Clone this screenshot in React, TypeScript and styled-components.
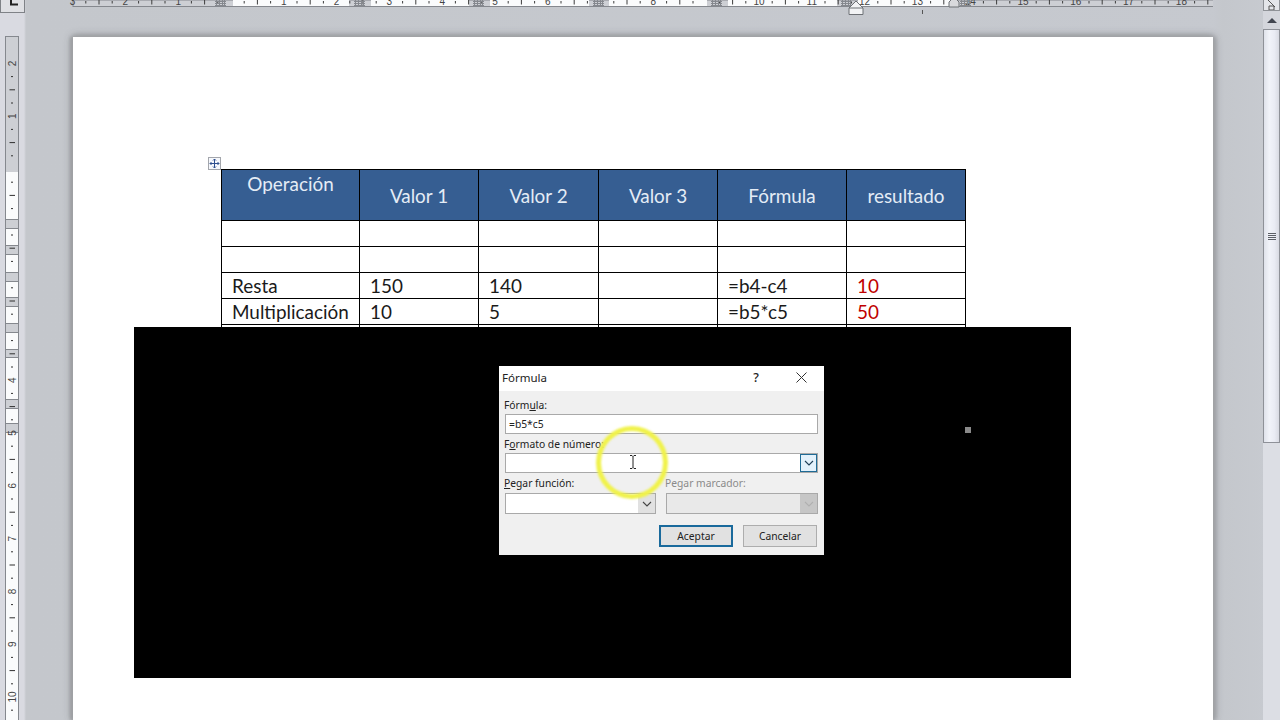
import React from "react";
import styled, { createGlobalStyle } from "styled-components";

const GlobalStyle = createGlobalStyle`
  html, body { margin: 0; padding: 0; background: #c8cbd1; }
  #root { width: 1280px; height: 720px; overflow: hidden; }
`;

const Workspace = styled.div`
  width: 1280px;
  height: 720px;
  overflow: hidden;
  display: grid;
  grid-template-columns: 73px 1140px 67px;
  grid-template-rows: 36px 684px;
  background: linear-gradient(90deg, #d9dae1 0, #d9dae1 24px, #c4c7cc 26px, #c6c9cf 100%);
`;

const RulerSvg = styled.svg`
  display: block;
  overflow: visible;
`;

const Gutter = styled.div`
  grid-row: 1 / span 2;
  grid-column: 3;
  display: flex;
  justify-content: flex-end;
  background: linear-gradient(90deg, #c6c9cf 0, #c4c7cc 10px, #c8cbd1 100%);
`;

const ScrollColumn = styled.div`
  width: 17px;
  background: #dcdee4;
  display: flex;
  flex-direction: column;
`;

const SplitButton = styled.div`
  height: 11px;
  box-sizing: border-box;
  border: 1px solid #8f9297;
  border-top: 0;
  background: #e4e6ea;
  display: flex;
  justify-content: center;
`;

const ArrowArea = styled.div`
  height: 18px;
  background: #d4d6dc;
  display: flex;
  align-items: center;
  justify-content: center;
`;

const UpArrow = styled.div`
  width: 0;
  height: 0;
  border-left: 5px solid transparent;
  border-right: 5px solid transparent;
  border-bottom: 5px solid #41454f;
`;

const Thumb = styled.div`
  height: 414px;
  box-sizing: border-box;
  border: 1px solid #8e9198;
  background: linear-gradient(90deg, #dfe2ea 0, #f1f3f9 35%, #e9ebf3 70%, #d8dae2 100%);
  display: flex;
  align-items: center;
  justify-content: center;
`;

const Grip = styled.div`
  width: 8px;
  height: 7px;
  background: repeating-linear-gradient(180deg, #5c5f66 0, #5c5f66 1px, transparent 1px, transparent 2px);
`;

const Sheet = styled.div`
  position: relative;
  margin-top: 1px;
  background: #fff;
  box-shadow: 0 -2px 4px #a2a4a7, -3px 0 3px #9d9fa2, 3px 0 4px #a0a2a5, 0 0 9px rgba(60, 62, 66, 0.45);
`;

const TableArea = styled.div`
  padding: 132px 0 0 148px;
`;

const MoveHandle = styled.div`
  position: absolute;
  left: 135px;
  top: 120px;
  width: 13px;
  height: 13px;
  box-sizing: border-box;
  border: 1px solid #a3a6ac;
  background: #f6f8fc;
  display: flex;
  align-items: center;
  justify-content: center;
`;

const DocTable = styled.table`
  border-collapse: collapse;
  table-layout: fixed;
  width: 744px;
  font-family: Lato, "Noto Sans", sans-serif;
  font-size: 18.9px;
  color: #1a1a1a;
`;

const HeadCell = styled.th<{ $top?: boolean }>`
  height: 51px;
  box-sizing: border-box;
  padding: ${p => (p.$top ? "2px 0 0" : "0")};
  vertical-align: ${p => (p.$top ? "top" : "middle")};
  border: 1px solid #000;
  background: #365e92;
  color: #e4ecf6;
  font-weight: 400;
  line-height: 23px;
  text-align: center;
`;

const BodyCell = styled.td<{ $red?: boolean }>`
  height: 26px;
  padding: 0 0 0 10px;
  border: 1px solid #000;
  box-sizing: border-box;
  line-height: 24px;
  white-space: nowrap;
  color: ${p => (p.$red ? "#c00000" : "#1a1a1a")};
`;

const BlackOut = styled.div`
  position: absolute;
  left: 61px;
  top: 290px;
  width: 937px;
  height: 351px;
  background: #000;
  box-sizing: border-box;
  padding: 39px 0 0 365px;
`;

const Speck = styled.div`
  position: absolute;
  left: 831px;
  top: 100px;
  width: 6px;
  height: 6px;
  background: #8a8a8a;
`;

const Dialog = styled.div`
  position: relative;
  width: 325px;
  height: 189px;
  background: #f0f0f0;
  font-family: "Noto Sans", "Open Sans", sans-serif;
  font-size: 10.3px;
  color: #222;
`;

const TitleBar = styled.div`
  height: 25px;
  box-sizing: border-box;
  padding: 0 0 2px 3px;
  background: #fff;
  display: flex;
  align-items: center;
  font-size: 11.5px;
`;

const TitleText = styled.span`
  flex: 1;
`;

const HelpMark = styled.span`
  width: 10px;
  margin-right: 35px;
  text-align: center;
  font-size: 12.5px;
  font-weight: 500;
`;

const CloseWrap = styled.span`
  display: flex;
  margin-right: 17px;
`;

const Body = styled.div`
  padding: 7px 6px 0 6px;
  display: flex;
  flex-direction: column;
`;

const FieldLabel = styled.div<{ $muted?: boolean }>`
  height: 16px;
  line-height: 15px;
  margin-left: -1px;
  white-space: nowrap;
  color: ${p => (p.$muted ? "#8a8a8a" : "#222")};
  u { text-underline-offset: 1px; }
`;

const PairLabel = styled(FieldLabel)`
  height: 17px;
`;

const TextBox = styled.div`
  height: 20px;
  box-sizing: border-box;
  border: 1px solid #a9a9a9;
  background: #fff;
  padding-left: 3px;
  line-height: 18px;
  margin-bottom: 3px;
`;

const Combo = styled.div<{ $disabled?: boolean }>`
  height: 21px;
  box-sizing: border-box;
  border: 1px solid #a9a9a9;
  background: ${p => (p.$disabled ? "#e9e9e9" : "#fff")};
  display: flex;
  justify-content: flex-end;
`;

const WideCombo = styled(Combo)`
  height: 20px;
  margin-bottom: 3px;
`;

const ComboButton = styled.div<{ $tone: "focus" | "plain" | "off" }>`
  width: 17px;
  box-sizing: border-box;
  display: flex;
  align-items: center;
  justify-content: center;
  background: ${p => (p.$tone === "focus" ? "#e3f1fb" : p.$tone === "plain" ? "#e1e1e1" : "#c6c6c6")};
  border: ${p => (p.$tone === "focus" ? "1.5px solid #1f6b96" : "0")};
`;

const TwoCols = styled.div`
  display: grid;
  grid-template-columns: 151px 152px;
  column-gap: 10px;
`;

const Actions = styled.div`
  display: flex;
  justify-content: flex-end;
  gap: 10px;
  margin-top: 11px;
  padding-right: 1px;
`;

const ActionButton = styled.div<{ $primary?: boolean }>`
  width: 74px;
  height: 22px;
  box-sizing: border-box;
  border: ${p => (p.$primary ? "2px solid #1a6a9c" : "1px solid #adadad")};
  background: #e1e1e1;
  display: flex;
  align-items: center;
  justify-content: center;
`;

const Highlight = styled.div`
  position: absolute;
  left: 97px;
  top: 60px;
  width: 72px;
  height: 73px;
  box-sizing: border-box;
  border: 5px solid #f0f24a;
  border-radius: 50%;
  filter: blur(0.9px);
`;

const Cursor = styled.svg`
  position: absolute;
  left: 130px;
  top: 89px;
`;

const CM = 52.8;
const grey = "#cdcfd4";
const line = "#85888e";

const topWhite: [number, number][] = [[233, 349], [371, 469], [490, 589], [609, 707], [728, 837], [858, 956]];
const gridMarks = [221, 360, 479, 599, 717, 847, 966];
const topNums: [number, string][] = [[-3, "3"], [-2, "2"], [-1, "1"], [1, "1"], [2, "2"], [3, "3"], [4, "4"], [5, "5"], [6, "6"], [8, "8"], [10, "10"], [11, "11"], [12, "12"], [13, "13"], [14, "14"], [15, "15"], [16, "16"], [17, "17"], [18, "18"]];

const GridMark = ({ x }: { x: number }) => (
  <g stroke="#85888e" strokeWidth="1">
    <path d={`M${x - 73 - 6} 1.5H${x - 73 + 5} M${x - 73 - 6} 3.5H${x - 73 + 5} M${x - 73 - 6} 5.5H${x - 73 + 5}`} />
    <path d={`M${x - 73 - 4.5} 0V6 M${x - 73 - 1.5} 0V6 M${x - 73 + 1.5} 0V6 M${x - 73 + 3.5} 0V6`} />
  </g>
);

const TopRuler = () => {
  const ticks: React.ReactNode[] = [];
  for (let q = -12; q <= 76; q++) {
    if (q % 4 === 0) continue;
    const x = 231 + (q * CM) / 4 - 73;
    if (x < 0 || x > 1140) continue;
    const half = Math.abs(q % 4) === 2;
    ticks.push(<line key={q} x1={x} x2={x} y1={half ? 0 : 1} y2={half ? 4.5 : 3.5} stroke="#3c3c3c" strokeWidth="1" />);
  }
  return (
    <RulerSvg width="1140" height="36" viewBox="0 0 1140 36">
      <rect x="0" y="0" width="1141" height="6.5" fill={grey} stroke={line} strokeWidth="1" />
      {topWhite.map(([a, b]) => <rect key={a} x={a - 73} y="0" width={b - a} height="6" fill="#fafbfc" />)}
      {ticks}
      {topNums.map(([n, t]) => (
        <text key={t + n} x={231 + n * CM - 73} y="5" textAnchor="middle" fontSize="10" fontFamily="Liberation Sans, sans-serif" fill="#444">{t}</text>
      ))}
      {gridMarks.map(x => <GridMark key={x} x={x} />)}
      <path d="M776 14.5V8L783 1L790 8V14.5Z" fill="#f2f3f5" stroke="#6d7075" />
      <path d="M776 8H790" stroke="#6d7075" />
      <path d="M876 7V2L881 -3L886 2V7Z" fill="#d8d9dc" stroke="#6d7075" />
      <line x1="849.5" x2="849.5" y1="10" y2="14" stroke="#555" />
    </RulerSvg>
  );
};

const sideGrey: [number, number][] = [[219, 228], [245, 254], [272, 281], [297, 306], [323, 332], [349, 357], [399, 408], [423, 432]];

const LeftRuler = () => {
  const ticks: React.ReactNode[] = [];
  const nums: React.ReactNode[] = [];
  for (let q = -8; q <= 44; q++) {
    const y = 169 + (q * CM) / 4 - 36;
    if (q % 4 === 0) {
      if (q >= 0 && q <= 12) continue;
      const label = String(Math.abs(q / 4));
      nums.push(
        <text key={q} x="0" y="0" transform={`translate(15.5 ${y}) rotate(-90)`} textAnchor="middle" fontSize="10" fontFamily="Liberation Sans, sans-serif" fill="#444">{label}</text>
      );
    } else {
      const half = Math.abs(q % 4) === 2;
      ticks.push(<line key={q} x1={half ? 9.5 : 11} x2={half ? 15 : 13} y1={y} y2={y} stroke="#2f2f2f" strokeWidth="1" />);
    }
  }
  return (
    <RulerSvg width="73" height="684" viewBox="0 0 73 684">
      <rect x="5.5" y="0.5" width="13" height="690" fill="#fafbfc" stroke={line} />
      <rect x="6" y="1" width="12" height="135" fill={grey} />
      {sideGrey.map(([a, b]) => (
        <rect key={a} x="5.5" y={a - 36 + 0.5} width="13" height={b - a} fill={grey} stroke={line} />
      ))}
      {ticks}
      {nums}
    </RulerSvg>
  );
};

const CornerTab = () => (
  <RulerSvg width="73" height="36" viewBox="0 0 73 36">
    <rect x="0.5" y="-2" width="24" height="14.5" fill="#dfe0e4" stroke="#7f8287" />
    <path d="M11 -1V4.5H18" fill="none" stroke="#222" strokeWidth="2" />
  </RulerSvg>
);

const Chevron = ({ color }: { color: string }) => (
  <svg width="10" height="6" viewBox="0 0 10 6">
    <path d="M1 1L5 5L9 1" fill="none" stroke={color} strokeWidth="1.1" />
  </svg>
);

const rows: [string, string, string, string, string, boolean][] = [
  ["", "", "", "", "", false],
  ["", "", "", "", "", false],
  ["Resta", "150", "140", "=b4-c4", "10", true],
  ["Multiplicación", "10", "5", "=b5*c5", "50", true],
  ["", "", "", "", "", false],
];

export default function App() {
  return (
    <Workspace>
      <GlobalStyle />
      <CornerTab />
      <TopRuler />
      <Gutter>
        <ScrollColumn>
          <SplitButton>
            <svg width="13" height="10" viewBox="0 0 13 10">
              <path d="M3 0L10 7M4 6H9V10H4Z" fill="none" stroke="#555" />
            </svg>
          </SplitButton>
          <ArrowArea><UpArrow /></ArrowArea>
          <Thumb><Grip /></Thumb>
        </ScrollColumn>
      </Gutter>
      <LeftRuler />
      <Sheet>
        <MoveHandle>
          <svg width="11" height="11" viewBox="0 0 11 11">
            <path d="M5.5 1V10M1 5.5H10M4 2.5L5.5 1L7 2.5M4 8.5L5.5 10L7 8.5M2.5 4L1 5.5L2.5 7M8.5 4L10 5.5L8.5 7" fill="none" stroke="#2e4f8f" strokeWidth="1" />
          </svg>
        </MoveHandle>
        <TableArea>
          <DocTable>
            <colgroup>
              <col width="138" />
              <col width="119" />
              <col width="120" />
              <col width="119" />
              <col width="129" />
              <col width="119" />
            </colgroup>
            <thead>
              <tr>
                <HeadCell $top>Operación</HeadCell>
                <HeadCell>Valor 1</HeadCell>
                <HeadCell>Valor 2</HeadCell>
                <HeadCell>Valor 3</HeadCell>
                <HeadCell>Fórmula</HeadCell>
                <HeadCell>resultado</HeadCell>
              </tr>
            </thead>
            <tbody>
              {rows.map((r, i) => (
                <tr key={i}>
                  <BodyCell>{r[0]}</BodyCell>
                  <BodyCell>{r[1]}</BodyCell>
                  <BodyCell>{r[2]}</BodyCell>
                  <BodyCell />
                  <BodyCell>{r[3]}</BodyCell>
                  <BodyCell $red={r[5]}>{r[4]}</BodyCell>
                </tr>
              ))}
            </tbody>
          </DocTable>
        </TableArea>
        <BlackOut>
          <Speck />
          <Dialog>
            <TitleBar>
              <TitleText>Fórmula</TitleText>
              <HelpMark>?</HelpMark>
              <CloseWrap>
                <svg width="11" height="11" viewBox="0 0 11 11">
                  <path d="M0.5 0.5L10.5 10.5M10.5 0.5L0.5 10.5" stroke="#333" strokeWidth="1" />
                </svg>
              </CloseWrap>
            </TitleBar>
            <Body>
              <FieldLabel>Fórm<u>u</u>la:</FieldLabel>
              <TextBox>=b5*c5</TextBox>
              <FieldLabel>F<u>o</u>rmato de número:</FieldLabel>
              <WideCombo>
                <ComboButton $tone="focus"><Chevron color="#1f3f58" /></ComboButton>
              </WideCombo>
              <TwoCols>
                <PairLabel><u>P</u>egar función:</PairLabel>
                <PairLabel $muted>Pegar marcador:</PairLabel>
                <Combo>
                  <ComboButton $tone="plain"><Chevron color="#444" /></ComboButton>
                </Combo>
                <Combo $disabled>
                  <ComboButton $tone="off"><Chevron color="#b0b0b0" /></ComboButton>
                </Combo>
              </TwoCols>
              <Actions>
                <ActionButton $primary>Aceptar</ActionButton>
                <ActionButton>Cancelar</ActionButton>
              </Actions>
            </Body>
            <Highlight />
            <Cursor width="8" height="14" viewBox="0 0 8 14">
              <path d="M1 0.5H3L4 1.5L5 0.5H7M4 1.5V12.5M1 13.5H3L4 12.5L5 13.5H7" fill="none" stroke="#222" strokeWidth="1" />
            </Cursor>
          </Dialog>
        </BlackOut>
      </Sheet>
    </Workspace>
  );
}
